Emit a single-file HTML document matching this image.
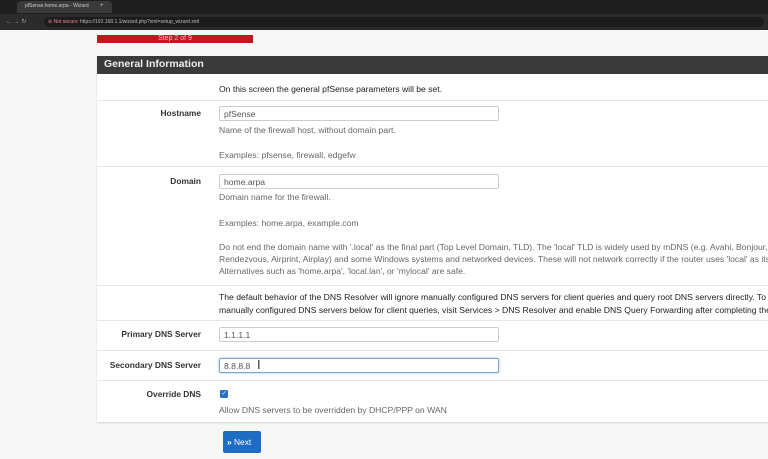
<!DOCTYPE html>
<html><head><style>
*{margin:0;padding:0;box-sizing:border-box}
body{width:768px;height:459px;overflow:hidden;background:#f7f7f7;font-family:"Liberation Sans",sans-serif;font-size:8.6px;color:#222;position:relative}
.a{position:absolute;white-space:nowrap}
.tabs{position:absolute;left:0;top:0;width:768px;height:14px;background:#1f1f1f}
.addr{position:absolute;left:0;top:14px;width:768px;height:16px;background:#2b2b2b}
.panel{position:absolute;left:97px;top:56px;width:671px;height:366px;background:#fff;box-shadow:0 1px 2px rgba(0,0,0,.15)}
.hdr{position:absolute;left:97px;top:56px;width:671px;height:18px;background:#3a3a3a;color:#eee;font-weight:bold;font-size:10.5px;padding:2px 0 0 7px}
.line{position:absolute;left:97px;width:671px;height:1px;background:#e6e6e6}
.lbl{position:absolute;right:567px;font-weight:bold;font-size:8.4px;color:#333;white-space:nowrap}
.in{position:absolute;left:219px;width:280px;height:15px;border:1px solid #ccc;border-radius:2px;padding:2px 4px;color:#555;background:#fff}
.help{position:absolute;left:219px;color:#666;white-space:nowrap}
</style></head><body>
<div class="tabs"><div class="a" style="left:17px;top:1px;width:95px;height:12px;background:#3a3a3a;border-radius:4px 4px 0 0"></div><div class="a" style="left:25px;top:3px;color:#ccc;font-size:5px">pfSense.home.arpa - Wizard</div><div class="a" style="left:100px;top:3px;color:#ccc;font-size:6px">+</div></div>
<div class="addr"><div class="a" style="left:44px;top:3px;width:720px;height:10px;background:#1c1c1c;border-radius:5px"></div><div class="a" style="left:48px;top:5px;color:#e88;font-size:5px">⊘ Not secure</div><div class="a" style="left:80px;top:5px;color:#bbb;font-size:5px">https://192.168.1.1/wizard.php?xml=setup_wizard.xml</div><div class="a" style="left:6px;top:4px;color:#aaa;font-size:6px">←  →  ↻</div></div>
<div class="a" style="left:97px;top:35px;width:156px;height:8px;background:#c0181c;color:#fbd;font-size:7px;text-align:center;line-height:8px">Step 2 of 9</div>
<div class="panel"></div>
<div class="hdr">General Information</div>
<div class="a" style="left:219px;top:84px">On this screen the general pfSense parameters will be set.</div>
<div class="line" style="top:100px"></div>
<div class="lbl" style="top:108px">Hostname</div>
<div class="in" style="top:106px">pfSense</div>
<div class="help" style="top:125px">Name of the firewall host, without domain part.</div>
<div class="help" style="top:150px">Examples: pfsense, firewall, edgefw</div>
<div class="line" style="top:166px"></div>
<div class="lbl" style="top:176px">Domain</div>
<div class="in" style="top:174px">home.arpa</div>
<div class="help" style="top:192px">Domain name for the firewall.</div>
<div class="help" style="top:218px">Examples: home.arpa, example.com</div>
<div class="help" style="top:242px">Do not end the domain name with '.local' as the final part (Top Level Domain, TLD). The 'local' TLD is widely used by mDNS (e.g. Avahi, Bonjour,</div>
<div class="help" style="top:254px">Rendezvous, Airprint, Airplay) and some Windows systems and networked devices. These will not network correctly if the router uses 'local' as its TLD.</div>
<div class="help" style="top:266px">Alternatives such as 'home.arpa', 'local.lan', or 'mylocal' are safe.</div>
<div class="line" style="top:285px"></div>
<div class="a" style="left:219px;top:292px">The default behavior of the DNS Resolver will ignore manually configured DNS servers for client queries and query root DNS servers directly. To use the</div>
<div class="a" style="left:219px;top:305px">manually configured DNS servers below for client queries, visit Services &gt; DNS Resolver and enable DNS Query Forwarding after completing the wizard.</div>
<div class="line" style="top:320px"></div>
<div class="lbl" style="top:329px">Primary DNS Server</div>
<div class="in" style="top:327px">1.1.1.1</div>
<div class="line" style="top:350px"></div>
<div class="lbl" style="top:360px">Secondary DNS Server</div>
<div class="in" style="top:358px;border-color:#7aa7d8;box-shadow:0 0 2px #9bc">8.8.8.8</div>
<div class="a" style="left:257px;top:357px;font-size:13px;color:#333">I</div>
<div class="line" style="top:380px"></div>
<div class="lbl" style="top:389px">Override DNS</div>
<div class="a" style="left:220px;top:390px;width:8px;height:8px;background:#2a6ec2;border-radius:1.5px;color:#fff;font-size:6px;line-height:8px;text-align:center">✓</div>
<div class="help" style="top:405px">Allow DNS servers to be overridden by DHCP/PPP on WAN</div>
<div class="a" style="left:223px;top:431px;width:38px;height:22px;background:#1e6cc4;border-radius:2px;color:#fff;font-size:8.4px;line-height:22px;padding-left:4px"><b>»</b> Next</div>
</body></html>
